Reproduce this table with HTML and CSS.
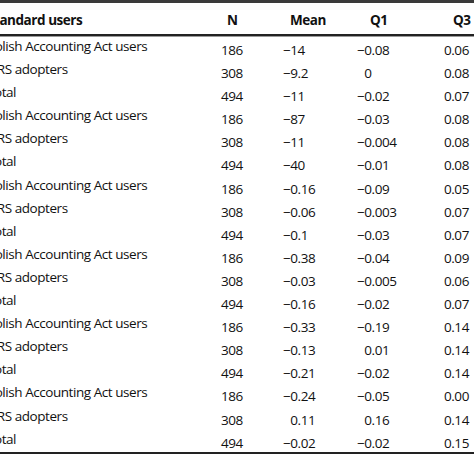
FILE: index.html
```html
<!DOCTYPE html>
<html>
<head>
<meta charset="utf-8">
<link rel="stylesheet" href="styles.css">
</head>
<body>
<div class="topbar"></div>
<div class="table">
  <div class="row head">
    <div class="c label">Standard users</div>
    <div class="c n">N</div>
    <div class="c mean">Mean</div>
    <div class="c q1">Q1</div>
    <div class="c q3">Q3</div>
  </div>
  <div class="body">
    <div class="row"><div class="c label">Polish Accounting Act users</div><div class="c n">186</div><div class="c mean">−14</div><div class="c q1">−0.08</div><div class="c q3">0.06</div></div>
    <div class="row"><div class="c label">IFRS adopters</div><div class="c n">308</div><div class="c mean">−9.2</div><div class="c q1"><span class="ph">−</span>0</div><div class="c q3">0.08</div></div>
    <div class="row"><div class="c label">Total</div><div class="c n">494</div><div class="c mean">−11</div><div class="c q1">−0.02</div><div class="c q3">0.07</div></div>
    <div class="row"><div class="c label">Polish Accounting Act users</div><div class="c n">186</div><div class="c mean">−87</div><div class="c q1">−0.03</div><div class="c q3">0.08</div></div>
    <div class="row"><div class="c label">IFRS adopters</div><div class="c n">308</div><div class="c mean">−11</div><div class="c q1">−0.004</div><div class="c q3">0.08</div></div>
    <div class="row"><div class="c label">Total</div><div class="c n">494</div><div class="c mean">−40</div><div class="c q1">−0.01</div><div class="c q3">0.08</div></div>
    <div class="row"><div class="c label">Polish Accounting Act users</div><div class="c n">186</div><div class="c mean">−0.16</div><div class="c q1">−0.09</div><div class="c q3">0.05</div></div>
    <div class="row"><div class="c label">IFRS adopters</div><div class="c n">308</div><div class="c mean">−0.06</div><div class="c q1">−0.003</div><div class="c q3">0.07</div></div>
    <div class="row"><div class="c label">Total</div><div class="c n">494</div><div class="c mean">−0.1</div><div class="c q1">−0.03</div><div class="c q3">0.07</div></div>
    <div class="row"><div class="c label">Polish Accounting Act users</div><div class="c n">186</div><div class="c mean">−0.38</div><div class="c q1">−0.04</div><div class="c q3">0.09</div></div>
    <div class="row"><div class="c label">IFRS adopters</div><div class="c n">308</div><div class="c mean">−0.03</div><div class="c q1">−0.005</div><div class="c q3">0.06</div></div>
    <div class="row"><div class="c label">Total</div><div class="c n">494</div><div class="c mean">−0.16</div><div class="c q1">−0.02</div><div class="c q3">0.07</div></div>
    <div class="row"><div class="c label">Polish Accounting Act users</div><div class="c n">186</div><div class="c mean">−0.33</div><div class="c q1">−0.19</div><div class="c q3">0.14</div></div>
    <div class="row"><div class="c label">IFRS adopters</div><div class="c n">308</div><div class="c mean">−0.13</div><div class="c q1"><span class="ph">−</span>0.01</div><div class="c q3">0.14</div></div>
    <div class="row"><div class="c label">Total</div><div class="c n">494</div><div class="c mean">−0.21</div><div class="c q1">−0.02</div><div class="c q3">0.14</div></div>
    <div class="row"><div class="c label">Polish Accounting Act users</div><div class="c n">186</div><div class="c mean">−0.24</div><div class="c q1">−0.05</div><div class="c q3">0.00</div></div>
    <div class="row"><div class="c label">IFRS adopters</div><div class="c n">308</div><div class="c mean"><span class="ph">−</span>0.11</div><div class="c q1"><span class="ph">−</span>0.16</div><div class="c q3">0.14</div></div>
    <div class="row"><div class="c label">Total</div><div class="c n">494</div><div class="c mean">−0.02</div><div class="c q1">−0.02</div><div class="c q3">0.15</div></div>
  </div>
</div>
</body>
</html>
```
FILE: styles.css
```css
html, body {
  margin: 0;
  padding: 0;
  overflow: hidden;
  background: #fff;
}
body {
  width: 474px;
  height: 474px;
  font-family: "Open Sans", Roboto, "Liberation Sans", sans-serif;
  font-size: 13.5px;
  font-weight: 500;
  letter-spacing: -0.45px;
  color: #111;
}
.topbar {
  height: 3px;
  background: #3a3a3a;
}
.table {
  margin-left: -13px;
  width: 520px;
}
.row {
  display: grid;
  grid-template-columns: 234px 62px 74px 87px 63px;
  height: 23.1px;
  align-items: start;
}
.head {
  height: 31px;
  font-weight: 700;
  border-bottom: 2px solid #222;
  box-shadow: 0 1px 0 #9a9a9a;
}
.head .c {
  line-height: 28px;
  padding-top: 3px;
}
.head .n { padding-left: 6px; }
.head .mean { padding-left: 7px; }
.head .q1 { padding-left: 13px; }
.head .q3 { padding-left: 9px; }
.body {
  border-bottom: 2px solid #222;
}
.body .c {
  line-height: 18px;
  white-space: nowrap;
  padding-top: 5px;
}
.body .label {
  padding-top: 1px;
}
.ph { visibility: hidden; }
```
